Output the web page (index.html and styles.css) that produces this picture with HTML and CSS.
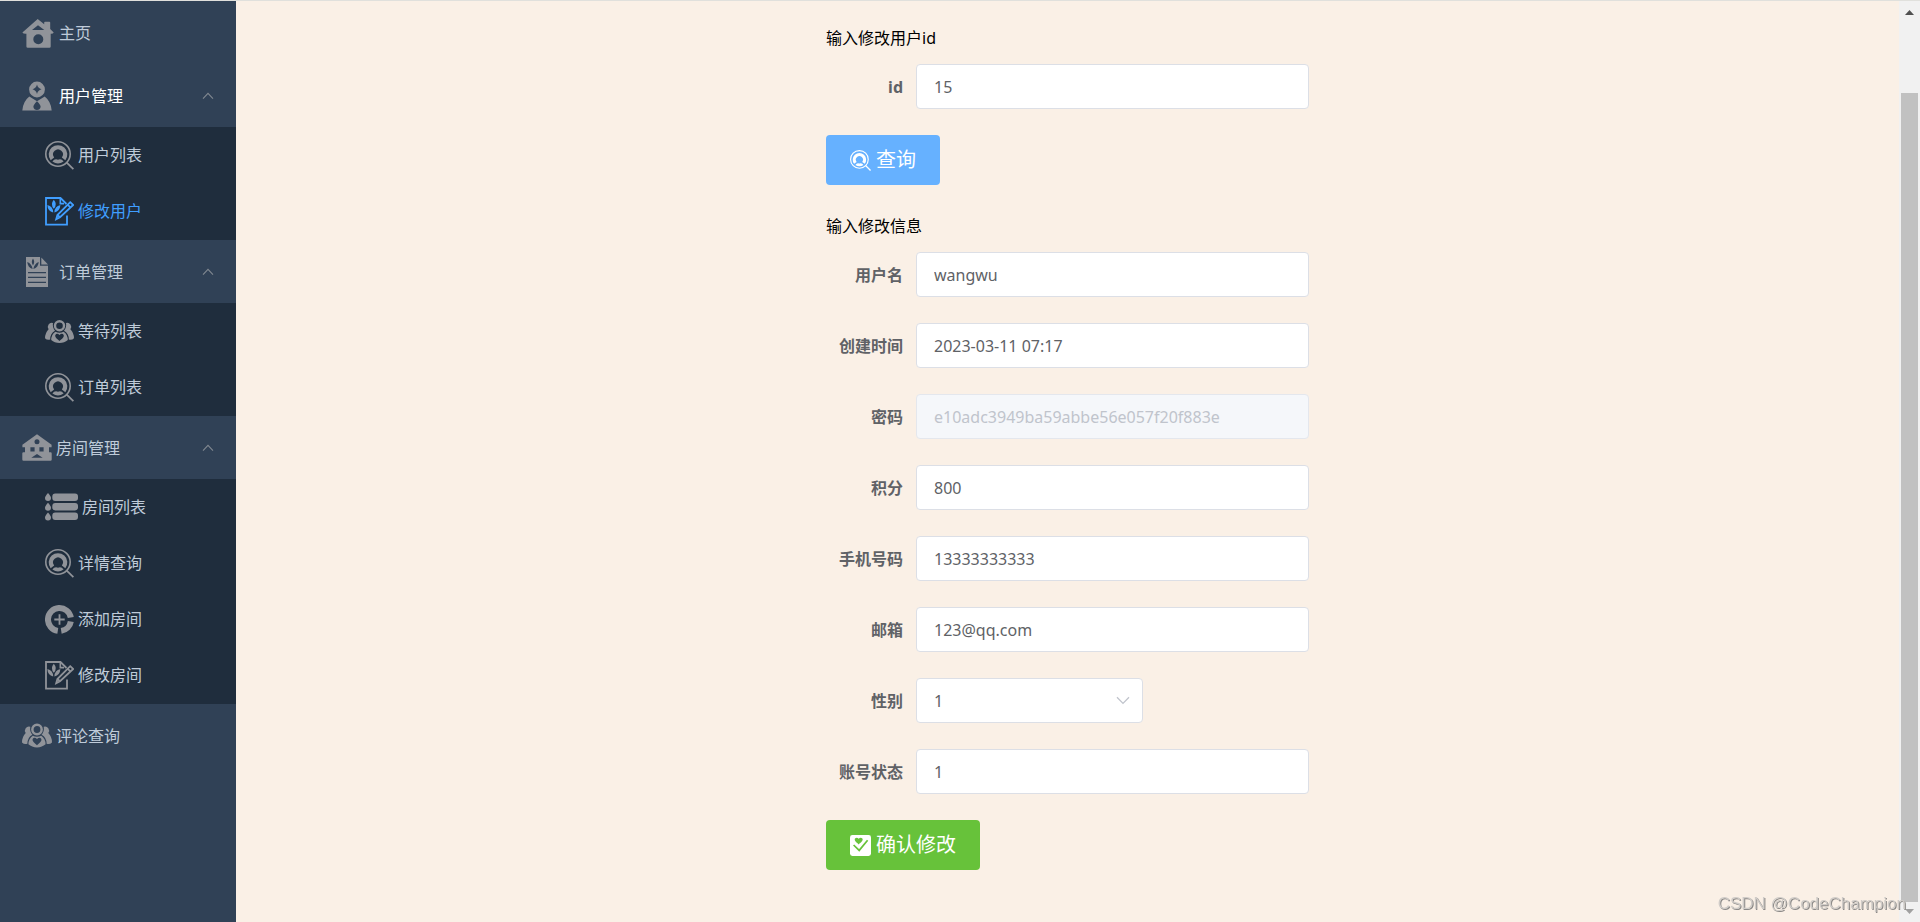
FILE: index.html
```html
<!DOCTYPE html>
<html lang="zh-CN">
<head>
<meta charset="utf-8">
<title>修改用户</title>
<link rel="stylesheet" href="styles.css">
</head>
<body>
<svg class="sprite" aria-hidden="true">
  <symbol id="i-search" viewBox="0 0 29 29">
    <circle cx="13" cy="13" r="12.2" fill="none" stroke="currentColor" stroke-width="1.6"/>
    <path d="M7.4 17.8A7.1 7.1 0 1 1 18.6 17.8" fill="none" stroke="currentColor" stroke-width="4.4"/>
    <path d="M7.4 20.6Q9.6 17.4 13 18.8Q16.4 17.4 18.6 20.6Q13 24.4 7.4 20.6Z" fill="currentColor"/>
    <path d="M21.5 21.3L28.4 28.2" stroke="currentColor" stroke-width="1.8"/>
  </symbol>
  <symbol id="i-edit" viewBox="0 0 29 29">
    <path d="M22 18.5V27.7H1V1H15.5L21.5 7" fill="none" stroke="currentColor" stroke-width="1.8"/>
    <path d="M15.3 1V6.6H19" fill="none" stroke="currentColor" stroke-width="1.6"/>
    <path d="M8.8 2.8Q12.8 7.3 8.8 11.8Q5 7.3 8.8 2.8ZM2.4 8Q8 9.2 8.2 15.4Q2.6 14.2 2.4 8ZM15.4 8Q9.6 9.2 9.4 15.4Q15 14.2 15.4 8Z" fill="currentColor"/>
    <path d="M25.2 5.2L28.2 8L15 20.2L11.2 22.2L12.4 18ZM22.5 7.6L25.4 10.4M12.4 18L15 20.2" fill="none" stroke="currentColor" stroke-width="1.8"/>
  </symbol>
  <symbol id="i-group" viewBox="0 0 29 23">
    <path d="M8 3A4 4 0 0 0 3.6 9.2Q0 13 0 18.2Q2.2 20.4 5.2 19.4Q5.2 13.5 10 10.8Q7.2 7.4 8 3ZM21 3A4 4 0 0 1 25.4 9.2Q29 13 29 18.2Q26.8 20.4 23.8 19.4Q23.8 13.5 19 10.8Q21.8 7.4 21 3Z" fill="currentColor"/>
    <circle cx="14.5" cy="5.7" r="4.5" fill="none" stroke="currentColor" stroke-width="2.4"/>
    <path fill-rule="evenodd" d="M10.4 11.7Q14.5 13.6 18.6 11.7Q22.8 14.6 22.8 20Q19.5 23 14.5 23Q9.5 23 6.2 20Q6.2 14.6 10.4 11.7ZM14.5 15Q11.8 12.4 10.3 15C9.7 17.5 12.5 19 14.5 21C16.5 19 19.3 17.5 18.7 15Q17.2 12.4 14.5 15Z" fill="currentColor"/>
  </symbol>
  <symbol id="i-up" viewBox="0 0 12 8">
    <path d="M1 6.6L6 1.4L11 6.6" fill="none" stroke="currentColor" stroke-width="1.1"/>
  </symbol>
</svg>

<div class="page">
  <nav class="sidebar" aria-label="主菜单">
    <a class="menu-row" href="#home">
      <svg class="icon icon-main" viewBox="0 0 33 30" aria-hidden="true"><path fill-rule="evenodd" d="M15.7 1L22.2 6.2V4.4Q22.2 3.7 23 3.7H27.4Q28.2 3.7 28.2 4.4V11L31.7 14.4Q31.2 16 28.7 15.8V28.4Q28.7 29.7 27.4 29.7H5.8Q4.4 29.7 4.4 28.4V15.8Q1.2 16 .4 14.6ZM10 12H22.3L16 7.3ZM16.3 16.3A5 5 0 1 0 16.3 26.3A5 5 0 1 0 16.3 16.3Z" fill="currentColor"/></svg>
      <span>主页</span>
    </a>

    <button class="menu-row menu-row-open" type="button" aria-expanded="true">
      <svg class="icon icon-main" viewBox="0 0 33 30" aria-hidden="true"><path fill-rule="evenodd" d="M15 .6A7.9 7.9 0 1 0 15 16.4A7.9 7.9 0 1 0 15 .6ZM15 3.6Q15.8 7.4 19.5 8.3Q15.8 9.2 15 13Q14.2 9.2 10.5 8.3Q14.2 7.4 15 3.6ZM7.3 15.6Q1 20.5 .3 29.6H29.7Q29 20.5 22.7 15.6L15 20.2Q19 24.2 18.6 26Q18 28.9 15 28.9Q12 28.9 11.4 26Q11 24.2 15 20.2Z" fill="currentColor"/></svg>
      <span>用户管理</span>
      <svg class="caret" aria-hidden="true"><use href="#i-up"/></svg>
    </button>
    <div class="submenu">
      <a class="menu-row" href="#user-list"><svg class="icon icon-sub" aria-hidden="true"><use href="#i-search"/></svg><span>用户列表</span></a>
      <a class="menu-row menu-row-active" href="#user-edit" aria-current="page"><svg class="icon icon-sub" aria-hidden="true"><use href="#i-edit"/></svg><span>修改用户</span></a>
    </div>

    <button class="menu-row" type="button" aria-expanded="true">
      <svg class="icon icon-main" viewBox="0 0 33 30" aria-hidden="true"><path fill-rule="evenodd" d="M4 0H18V8.8H26V30H4ZM11 1.6Q8.6 5 11 8.4Q13.4 5 11 1.6ZM5.3 5Q5.6 10.4 10.6 12Q9.8 6.8 5.3 5ZM16.7 5Q12.2 6.8 11.4 12Q16.4 10.4 16.7 5ZM6 15V16.3H24V15ZM6 19.7V21H24V19.7ZM6 24.7V26H24V24.7Z" fill="currentColor"/><path d="M19.3 .4L26 7.6H19.3Z" fill="currentColor"/></svg>
      <span>订单管理</span>
      <svg class="caret" aria-hidden="true"><use href="#i-up"/></svg>
    </button>
    <div class="submenu">
      <a class="menu-row" href="#wait-list"><svg class="icon icon-sub" aria-hidden="true"><use href="#i-group"/></svg><span>等待列表</span></a>
      <a class="menu-row" href="#order-list"><svg class="icon icon-sub" aria-hidden="true"><use href="#i-search"/></svg><span>订单列表</span></a>
    </div>

    <button class="menu-row" type="button" aria-expanded="true">
      <svg class="icon icon-house" viewBox="0 0 30 27" aria-hidden="true"><path fill-rule="evenodd" d="M15 .3L29.6 10.8V13.2H27V18.2H28.6Q29.7 18.2 29.7 19.4V25.5Q29.7 26.7 28.5 26.7H1.5Q.3 26.7 .3 25.5V19.4Q.3 18.2 1.4 18.2H3V13.2H.4V10.8ZM15 5.2A2.5 2.5 0 1 0 15 10.2A2.5 2.5 0 1 0 15 5.2ZM8.4 13.2V17.4H12.6V13.2ZM17.4 13.2V17.4H21.6V13.2ZM15 20L9.3 23.8H20.7Z" fill="currentColor"/></svg>
      <span>房间管理</span>
      <svg class="caret" aria-hidden="true"><use href="#i-up"/></svg>
    </button>
    <div class="submenu">
      <a class="menu-row" href="#room-list">
        <svg class="icon icon-list" viewBox="0 0 33 28" aria-hidden="true"><g fill="currentColor"><rect x="7.3" y=".5" width="25.7" height="7.4" rx="3"/><rect x="7.3" y="10" width="25.7" height="7.4" rx="3"/><rect x="7.3" y="19.6" width="25.7" height="7.4" rx="3"/><path d="M3 0Q6 3.4 6 5A3 3 0 0 1 0 5Q0 3.4 3 0ZM3 9.7Q6 13.1 6 14.7A3 3 0 0 1 0 14.7Q0 13.1 3 9.7ZM3 19.4Q6 22.8 6 24.4A3 3 0 0 1 0 24.4Q0 22.8 3 19.4Z"/></g></svg>
        <span>房间列表</span>
      </a>
      <a class="menu-row" href="#room-detail"><svg class="icon icon-sub" aria-hidden="true"><use href="#i-search"/></svg><span>详情查询</span></a>
      <a class="menu-row" href="#room-add">
        <svg class="icon icon-sub" viewBox="0 0 29 29" aria-hidden="true"><path d="M25.8 12.6A11.5 11.5 0 1 0 12.8 25.9M16.2 25.9A11.5 11.5 0 0 0 25.8 16.4" fill="none" stroke="currentColor" stroke-width="6"/><path d="M14.5 9.3V19.7M9.3 14.5H19.7" stroke="currentColor" stroke-width="1.8"/></svg>
        <span>添加房间</span>
      </a>
      <a class="menu-row" href="#room-edit"><svg class="icon icon-sub" aria-hidden="true"><use href="#i-edit"/></svg><span>修改房间</span></a>
    </div>

    <a class="menu-row" href="#comments"><svg class="icon icon-house" aria-hidden="true"><use href="#i-group"/></svg><span>评论查询</span></a>
  </nav>

  <main class="content">
    <div class="panel">
      <form class="form">
        <p class="title">输入修改用户id</p>
        <div class="field"><label for="uid">id</label><input id="uid" type="text" value="15"></div>
        <button class="btn btn-query" type="button">
          <svg class="btn-icon" aria-hidden="true"><use href="#i-search"/></svg><span>查询</span>
        </button>
      </form>
      <form class="form">
        <p class="title">输入修改信息</p>
        <div class="field"><label for="name">用户名</label><input id="name" type="text" value="wangwu"></div>
        <div class="field"><label for="created">创建时间</label><input id="created" type="text" value="2023-03-11 07:17"></div>
        <div class="field"><label for="pwd">密码</label><input id="pwd" type="text" value="e10adc3949ba59abbe56e057f20f883e" disabled></div>
        <div class="field"><label for="points">积分</label><input id="points" type="text" value="800"></div>
        <div class="field"><label for="phone">手机号码</label><input id="phone" type="text" value="13333333333"></div>
        <div class="field"><label for="mail">邮箱</label><input id="mail" type="text" value="123@qq.com"></div>
        <div class="field">
          <label for="sex">性别</label>
          <div class="select">
            <select id="sex"><option>1</option><option>0</option></select>
            <svg class="select-arrow" viewBox="0 0 14 9" aria-hidden="true"><path d="M1 1.2L7 7.4L13 1.2" fill="none" stroke="currentColor" stroke-width="1.3"/></svg>
          </div>
        </div>
        <div class="field"><label for="state">账号状态</label><input id="state" type="text" value="1"></div>
        <button class="btn btn-confirm" type="button">
          <svg class="btn-icon" viewBox="0 0 21 21" aria-hidden="true"><rect width="21" height="21" rx="2.4" fill="currentColor"/><path d="M8.7 3.8Q6.8 1.8 5 3.6C3.8 5.8 6.6 7.6 8.7 9.4C10.8 7.6 13.6 5.8 12.4 3.6Q10.6 1.8 8.7 3.8Z" fill="#67c23a"/><path d="M3.6 10L9.2 15.4L17.6 5.2" fill="none" stroke="#67c23a" stroke-width="1.7"/></svg>
          <span>确认修改</span>
        </button>
      </form>
    </div>
  </main>

  <div class="scrollbar" aria-hidden="true">
    <svg class="scroll-arrow" viewBox="0 0 9 5"><path d="M0 5L4.5 0L9 5Z" fill="#505050"/></svg>
    <div class="scroll-thumb"></div>
    <svg class="scroll-arrow" viewBox="0 0 9 5"><path d="M0 0L4.5 5L9 0Z" fill="#a0a0a0"/></svg>
  </div>
</div>
<div class="watermark">CSDN @CodeChampion</div>
</body>
</html>
```
FILE: styles.css
```css
* {
  box-sizing: border-box;
}

body {
  margin: 0;
  font-family: "Noto Sans", "Noto Sans CJK SC", sans-serif;
  font-size: 16px;
  line-height: 24px;
  color: #000;
}

button,
input,
select {
  font: inherit;
}

.sprite {
  position: absolute;
  width: 0;
  height: 0;
}

.page {
  display: flex;
  min-height: 100vh;
  border-top: 1px solid #e0e0dc;
  background: #faf0e6;
}

/* Sidebar */
.sidebar {
  flex: 0 0 236px;
  background: #304156;
}

.menu-row {
  display: flex;
  align-items: center;
  gap: 4px;
  width: 100%;
  height: 63px;
  padding: 0 22px;
  border: 0;
  background: none;
  color: #bfcbd9;
  text-align: left;
  text-decoration: none;
  cursor: pointer;
}

.menu-row-open {
  color: #fff;
}

.submenu {
  padding-bottom: 1px;
  background: #1f2d3d;
}

.submenu .menu-row {
  height: 56px;
  padding-left: 45px;
}

.icon {
  flex: none;
  color: #909399;
}

.icon-main {
  width: 33px;
  height: 30px;
}

.icon-house {
  width: 30px;
  height: 27px;
}

.icon-sub {
  width: 29px;
  height: 29px;
}

.icon-list {
  width: 33px;
  height: 28px;
}

.menu-row-active,
.menu-row-active .icon {
  color: #409eff;
}

.caret {
  width: 12px;
  height: 8px;
  margin-left: auto;
  color: #808890;
}

/* Content */
.content {
  flex: 1;
  display: flex;
  justify-content: center;
  padding: 25px 0 50px;
}

.panel {
  display: flex;
  flex-direction: column;
  gap: 29px;
  width: 483px;
}

.form {
  display: flex;
  flex-direction: column;
  align-items: flex-start;
  gap: 26px;
}

.title {
  margin: 0 0 -12px;
}

.field {
  display: flex;
  align-items: center;
  gap: 13px;
  width: 100%;
}

.field label {
  flex: 0 0 77px;
  text-align: right;
  font-weight: 700;
  color: #606266;
}

.field input,
.field select {
  flex: 1;
  min-width: 0;
  height: 45px;
  padding: 0 17px;
  border: 1px solid #dcdfe6;
  border-radius: 4px;
  background: #fff;
  color: #606266;
}

.field input:disabled {
  border-color: #e4e7ed;
  background: #f5f7fa;
  color: #c0c4cc;
}

.select {
  position: relative;
  display: flex;
  width: 227px;
}

.field select {
  appearance: none;
}

.select-arrow {
  position: absolute;
  top: 18px;
  right: 13px;
  width: 14px;
  height: 9px;
  color: #c0c4cc;
  pointer-events: none;
}

.btn {
  display: flex;
  align-items: center;
  gap: 5px;
  height: 50px;
  padding: 0 24px;
  border: 0;
  border-radius: 4px;
  color: #fff;
  font-size: 20px;
}

.btn-icon {
  width: 21px;
  height: 21px;
}

.btn-query {
  background: #66b1ff;
}

.btn-confirm {
  background: #67c23a;
}

/* Scrollbar */
.scrollbar {
  flex: 0 0 21px;
  display: flex;
  flex-direction: column;
  align-items: center;
  padding: 9px 1px 8px 0;
  background: #f1f1f1;
}

.scroll-arrow {
  width: 9px;
  height: 5px;
}

.scroll-thumb {
  flex: 1;
  width: 17px;
  margin: 78px 0 7px;
  background: #c1c1c1;
}

.watermark {
  position: fixed;
  right: 14px;
  bottom: 6px;
  font-family: "Liberation Sans", sans-serif;
  font-size: 17px;
  color: #d0ccc8;
  text-shadow: 1px 1px 0 #8c8a88;
}
```
